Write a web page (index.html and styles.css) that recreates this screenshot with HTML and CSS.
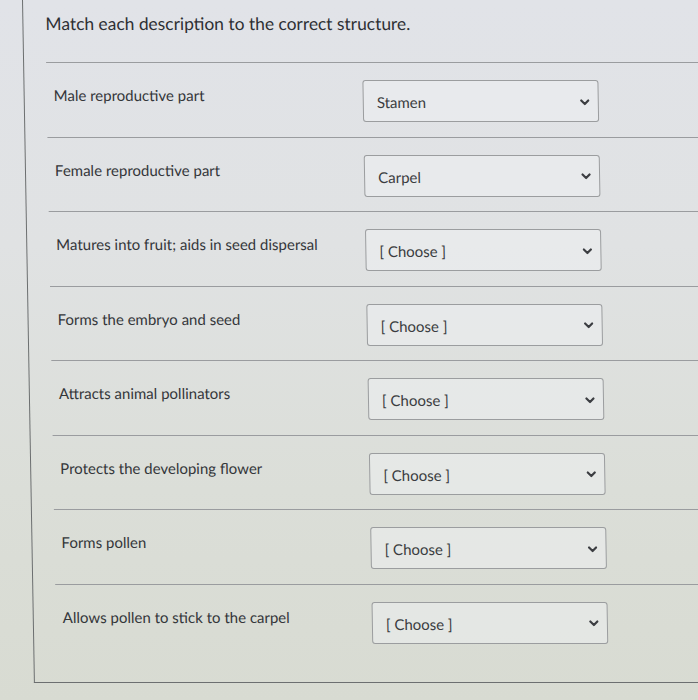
FILE: index.html
```html
<!DOCTYPE html>
<html lang="en">
<head>
<meta charset="utf-8">
<title>Match each description</title>
<link rel="stylesheet" href="styles.css">
</head>
<body>
<div class="panel">
  <h1 class="title">Match each description to the correct structure.</h1>
  <div class="rows">
    <div class="row"><div class="label">Male reproductive part</div><div class="select"><span>Stamen</span><svg class="chev" viewBox="0 0 10 7" width="10" height="7"><path d="M1.5 1.5 L5 5 L8.5 1.5"/></svg></div></div>
    <div class="row"><div class="label">Female reproductive part</div><div class="select"><span>Carpel</span><svg class="chev" viewBox="0 0 10 7" width="10" height="7"><path d="M1.5 1.5 L5 5 L8.5 1.5"/></svg></div></div>
    <div class="row"><div class="label">Matures into fruit; aids in seed dispersal</div><div class="select"><span>[ Choose ]</span><svg class="chev" viewBox="0 0 10 7" width="10" height="7"><path d="M1.5 1.5 L5 5 L8.5 1.5"/></svg></div></div>
    <div class="row"><div class="label">Forms the embryo and seed</div><div class="select"><span>[ Choose ]</span><svg class="chev" viewBox="0 0 10 7" width="10" height="7"><path d="M1.5 1.5 L5 5 L8.5 1.5"/></svg></div></div>
    <div class="row"><div class="label">Attracts animal pollinators</div><div class="select"><span>[ Choose ]</span><svg class="chev" viewBox="0 0 10 7" width="10" height="7"><path d="M1.5 1.5 L5 5 L8.5 1.5"/></svg></div></div>
    <div class="row"><div class="label">Protects the developing flower</div><div class="select"><span>[ Choose ]</span><svg class="chev" viewBox="0 0 10 7" width="10" height="7"><path d="M1.5 1.5 L5 5 L8.5 1.5"/></svg></div></div>
    <div class="row"><div class="label">Forms pollen</div><div class="select"><span>[ Choose ]</span><svg class="chev" viewBox="0 0 10 7" width="10" height="7"><path d="M1.5 1.5 L5 5 L8.5 1.5"/></svg></div></div>
    <div class="row"><div class="label">Allows pollen to stick to the carpel</div><div class="select"><span>[ Choose ]</span><svg class="chev" viewBox="0 0 10 7" width="10" height="7"><path d="M1.5 1.5 L5 5 L8.5 1.5"/></svg></div></div>
  </div>
</div>
</body>
</html>
```
FILE: styles.css
```css
html, body {
  margin: 0;
  padding: 0;
}
body {
  width: 698px;
  height: 700px;
  overflow: hidden;
  font-family: Lato, "Open Sans", "Liberation Sans", sans-serif;
  color: #34363a;
  background: linear-gradient(to bottom, #e1e3e8 0%, #e0e2e3 35%, #dbded8 70%, #d8dbd2 100%);
}
.panel {
  margin-left: 22px;
  height: 683px;
  box-sizing: border-box;
  border-left: 1px solid #6c6f70;
  border-bottom: 1px solid #6c6f70;
  transform: skewX(1deg);
  transform-origin: 0 0;
}
.title {
  margin: 0;
  padding: 14px 0 0 22px;
  height: 62px;
  box-sizing: border-box;
  font-size: 17.4px;
  line-height: 20px;
  font-weight: 400;
  color: #2e3034;
}
.rows {
  display: flex;
  flex-direction: column;
}
.row {
  margin-left: 22px;
  height: 74.5px;
  box-sizing: border-box;
  border-top: 1px solid #9a9c9f;
  display: flex;
  align-items: flex-start;
}
.label {
  width: 316px;
  flex: none;
  box-sizing: border-box;
  padding: 22px 0 0 7px;
  font-size: 15px;
  line-height: 20px;
  color: #34363a;
}
.select {
  margin-top: 17px;
  width: 236px;
  height: 42px;
  box-sizing: border-box;
  border: 1px solid #9b9d9f;
  border-radius: 3px;
  background: rgba(240, 242, 243, 0.5);
  display: flex;
  align-items: center;
  justify-content: space-between;
  padding: 2px 8px 0 13px;
  font-size: 15px;
  color: #3a3c40;
}
.chev {
  fill: none;
  stroke: #3c3e42;
  stroke-width: 2.2;
  stroke-linecap: round;
  stroke-linejoin: round;
}
```
